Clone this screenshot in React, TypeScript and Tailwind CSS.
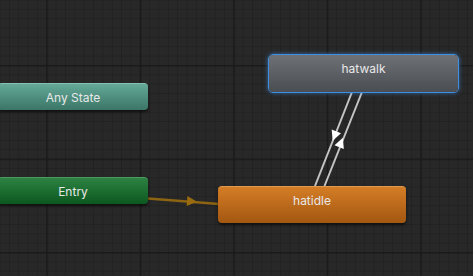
import React from 'react'

type NodeProps = {
  label: string
  className: string
}

function StateNode({ label, className }: NodeProps) {
  return (
    <div className={`absolute rounded-[4px] shadow-[0_2px_3px_rgba(0,0,0,0.6)] ${className}`}>
      <div className="h-[27px] leading-[27px] text-center text-[12px] text-[#e8e8e8] font-['Inter',sans-serif]">
        {label}
      </div>
    </div>
  )
}

// arrow triangle centred on c, pointing along (dx, dy)
function arrow(cx: number, cy: number, dx: number, dy: number, s: number) {
  const len = Math.hypot(dx, dy)
  const ux = dx / len
  const uy = dy / len
  const nx = -uy
  const ny = ux
  const tip = [cx + ux * s, cy + uy * s]
  const b1 = [cx - ux * s + nx * s, cy - uy * s + ny * s]
  const b2 = [cx - ux * s - nx * s, cy - uy * s - ny * s]
  return `${tip.join(',')} ${b1.join(',')} ${b2.join(',')}`
}

export default function App() {
  return (
    <div className="relative w-[473px] h-[276px] overflow-hidden bg-[#282828]">
      {/* grid + transitions */}
      <svg className="absolute inset-0" width="473" height="276">
        <defs>
          <pattern id="minor" width="9.35" height="9.35" x="8.9" y="8.9" patternUnits="userSpaceOnUse">
            <path d="M0 0.5H9.35M0.5 0V9.35" stroke="#222222" strokeWidth="1" fill="none" />
          </pattern>
          <pattern id="major" width="93.5" height="93.5" x="46.3" y="65" patternUnits="userSpaceOnUse">
            <path d="M0 0.75H93.5M0.75 0V93.5" stroke="#1a1a1a" strokeWidth="1.5" fill="none" />
          </pattern>
        </defs>
        <rect width="473" height="276" fill="url(#minor)" />
        <rect width="473" height="276" fill="url(#major)" />

        {/* Entry -> hatidle */}
        <line x1="148" y1="198.5" x2="219" y2="204" stroke="#8c6412" strokeWidth="2.5" />
        <polygon points={arrow(192, 201.4, 70, 5.5, 5)} fill="#9a6c10" />

        {/* hatwalk <-> hatidle */}
        <line x1="352" y1="92" x2="315" y2="186" stroke="#c4c4c4" strokeWidth="2" />
        <line x1="362" y1="92" x2="324.5" y2="186" stroke="#c4c4c4" strokeWidth="2" />
        <polygon points={arrow(334.5, 136, -37, 94, 5)} fill="#ffffff" />
        <polygon points={arrow(341, 142.5, 37.5, -94, 5)} fill="#ffffff" />
      </svg>

      <StateNode
        label="Any State"
        className="left-[-2px] top-[83px] w-[150px] h-[27px] bg-gradient-to-b from-[#64a998] to-[#3b7667] border-t border-[#86c2b3]"
      />
      <StateNode
        label="Entry"
        className="left-[-2px] top-[177px] w-[150px] h-[27px] bg-gradient-to-b from-[#2c8243] to-[#0b581e] border-t border-[#4c9a60]"
      />
      <StateNode
        label="hatidle"
        className="left-[218px] top-[186px] w-[188px] h-[37px] bg-gradient-to-b from-[#d47d26] to-[#a35710] border-t border-[#e29a52]"
      />
      <div className="absolute left-[268px] top-[54px] w-[191px] h-[39px] rounded-[5px] border border-[#3f8fe0] shadow-[0_0_4px_rgba(64,140,230,0.7)]">
        <div className="h-full rounded-[4px] bg-gradient-to-b from-[#6e7176] to-[#4a4d52]">
          <div className="h-[26px] leading-[27px] text-center text-[12px] text-[#e8e8e8] font-['Inter',sans-serif]">
            hatwalk
          </div>
        </div>
      </div>
    </div>
  )
}
